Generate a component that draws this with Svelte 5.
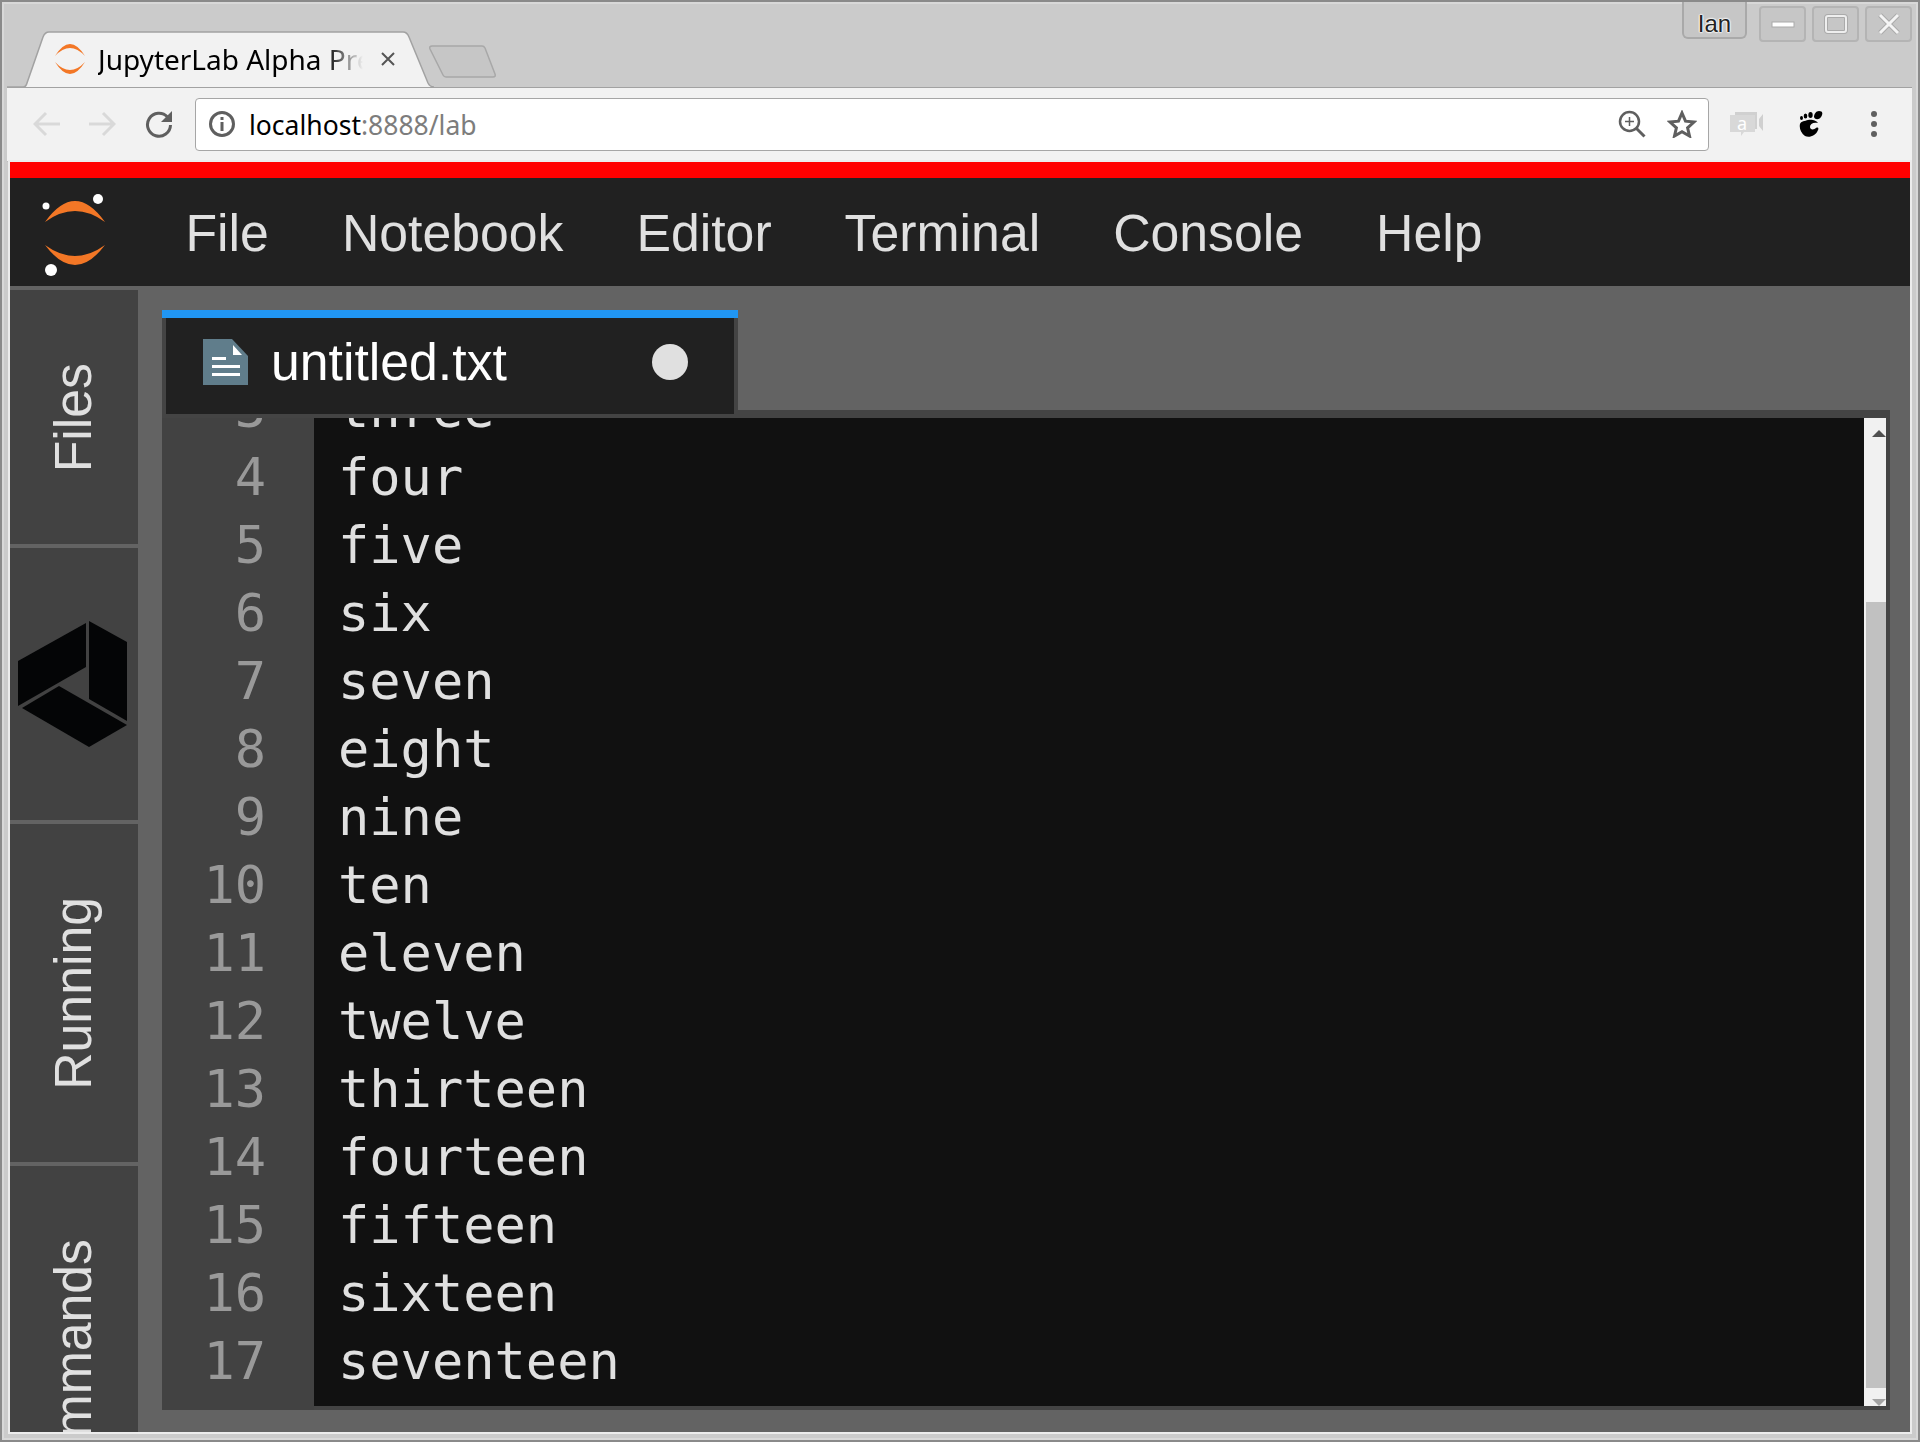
<script lang="ts">
	const menus = ['File', 'Notebook', 'Editor', 'Terminal', 'Console', 'Help'];
	const lines = [
		'one', 'two', 'three', 'four', 'five', 'six', 'seven', 'eight', 'nine', 'ten',
		'eleven', 'twelve', 'thirteen', 'fourteen', 'fifteen', 'sixteen', 'seventeen'
	];
</script>

<div class="window">
	<!-- browser chrome -->
	<div class="tabstrip">
		<div class="browser-tab">
			<svg class="tab-shape" width="420" height="60" viewBox="0 0 420 60">
				<path d="M-14 56 H2 Q5 56 6 52 L22 6 Q24 1 28 1 H382 Q386 1 388 6 L407 52 Q409 56 413 56" fill="#f2f2f2" stroke="#a2a2a2" stroke-width="1.5" />
			</svg>
			<svg class="favicon" width="30" height="30" viewBox="0 0 30 30">
				<path d="M0 12 Q15 -12 30 12 Q15 -4 0 12Z M0 18 Q15 42 30 18 Q15 34 0 18Z" fill="#f37726" />
			</svg>
			<span class="tab-title">JupyterLab Alpha Preview</span>
			<svg class="tab-close" width="14" height="14" viewBox="0 0 14 14">
				<path d="M1 1 L13 13 M13 1 L1 13" stroke="#555" stroke-width="2" />
			</svg>
		</div>
		<svg class="new-tab" width="68" height="34" viewBox="0 0 68 34">
			<path d="M3 1 H53 Q55 1 56 3 L66 29 Q67 32 64 32 H17 Q15 32 14 30 L1 4 Q0 1 3 1Z" fill="#c6c6c6" stroke="#a8a8a8" stroke-width="1.5" />
		</svg>
		<div class="spacer"></div>
		<div class="user-chip">Ian</div>
		<div class="win-btn">
			<svg width="24" height="10" viewBox="0 0 24 10"><rect x="1" y="3" width="22" height="5" fill="#fff" stroke="#aaa" /></svg>
		</div>
		<div class="win-btn">
			<svg width="24" height="20" viewBox="0 0 24 20"><rect x="2" y="2" width="20" height="16" rx="2" fill="none" stroke="#aaa" stroke-width="4" /><rect x="2" y="2" width="20" height="16" rx="2" fill="none" stroke="#eee" stroke-width="2" /></svg>
		</div>
		<div class="win-btn">
			<svg width="24" height="22" viewBox="0 0 24 22"><path d="M3 2 L21 20 M21 2 L3 20" stroke="#aaa" stroke-width="5" /><path d="M3 2 L21 20 M21 2 L3 20" stroke="#f4f4f4" stroke-width="3" /></svg>
		</div>
	</div>

	<div class="toolbar">
		<svg class="nav" width="28" height="26" viewBox="0 0 28 26">
			<path d="M27 13 H3 M13 2 L2 13 L13 24" fill="none" stroke="#d9d9d9" stroke-width="3" />
		</svg>
		<svg class="nav fwd" width="28" height="26" viewBox="0 0 28 26">
			<path d="M1 13 H25 M15 2 L26 13 L15 24" fill="none" stroke="#d9d9d9" stroke-width="3" />
		</svg>
		<svg class="nav" width="28" height="28" viewBox="0 0 28 28">
			<path d="M22.5 7 A11.5 11.5 0 1 0 25.5 15" fill="none" stroke="#5f5f5f" stroke-width="3" />
			<path d="M27 1 V12 H16 Z" fill="#5f5f5f" />
		</svg>
		<div class="omnibox">
			<svg class="info" width="28" height="28" viewBox="0 0 28 28">
				<circle cx="14" cy="14" r="11.5" fill="none" stroke="#5f5f5f" stroke-width="3" />
				<rect x="12.5" y="12" width="3" height="9" fill="#5f5f5f" />
				<rect x="12.5" y="7" width="3" height="3" fill="#5f5f5f" />
			</svg>
			<span class="url"><span class="host">localhost</span>:8888/lab</span>
			<div class="spacer"></div>
			<svg class="zoom-icon" width="28" height="28" viewBox="0 0 28 28">
				<circle cx="11.5" cy="11.5" r="9.5" fill="none" stroke="#5f5f5f" stroke-width="2.5" />
				<path d="M7 11.5 H16 M11.5 7 V16" stroke="#5f5f5f" stroke-width="1.5" />
				<path d="M18.5 18.5 L26.5 26.5" stroke="#5f5f5f" stroke-width="3" />
			</svg>
			<svg class="star" width="30" height="28" viewBox="0 0 30 28">
				<path d="M15 3 L18.5 11.2 L27 12 L20.6 17.8 L22.5 26 L15 21.7 L7.5 26 L9.4 17.8 L3 12 L11.5 11.2 Z" fill="none" stroke="#5f5f5f" stroke-width="3" />
			</svg>
		</div>
		<div class="ext-icon">
			<svg width="33" height="27" viewBox="0 0 33 27">
				<path d="M0 4 H25 V21 H14 L11 25 L11 21 H0 Z" fill="#d8d8d8" />
				<path d="M5 1 H27 V18 H25 V4 H5 Z M29 8 L33 3 V20 L29 15 Z" fill="#d0d0d0" />
			</svg>
			<span class="ext-a">a</span>
		</div>
		<svg class="gnome" width="24" height="26" viewBox="0 0 24 26">
			<path d="M20 0 C24 0 24 3 22 6 C20 9 16 9 15 6 C15 3 17 0 20 0Z" fill="#000" />
			<ellipse cx="11.5" cy="4" rx="2.2" ry="3" fill="#000" />
			<ellipse cx="6.5" cy="5" rx="1.8" ry="2.5" fill="#000" />
			<ellipse cx="2.5" cy="7" rx="1.5" ry="2" fill="#000" />
			<path d="M9 9 C13 8 18 10 19 12 C14 11 11 13 11 16 C11 19 15 19 17 17 C19 16 20 17 19 19 C17 25 10 27 6 25 C2 22 0 17 1 13 C2 10 6 10 9 9Z" fill="#000" />
		</svg>
		<div class="kebab"><i></i><i></i><i></i></div>
	</div>

	<!-- the lab itself -->
	<div class="lab">
		<div class="redbar"></div>
		<header class="menubar">
			<svg class="logo" width="66" height="78" viewBox="0 0 66 78">
				<path d="M3 29 Q33 -13 63 29 Q33 7 3 29Z M3 52 Q33 92 63 52 Q33 74 3 52Z" fill="#f37726" />
				<circle cx="56" cy="6" r="5" fill="#fff" />
				<circle cx="4" cy="13" r="3.5" fill="#fff" />
				<circle cx="9" cy="77" r="6" fill="#fff" />
			</svg>
			<nav>
				{#each menus as m}
					<span class="menu-item">{m}</span>
				{/each}
			</nav>
		</header>

		<div class="workspace">
			<aside class="sidebar">
				<div class="side-tab"><span>Files</span></div>
				<div class="side-tab cube">
					<svg width="110" height="126" viewBox="18 621 110 126">
						<path d="M18 661 L86 623 V667 L18 706Z" fill="#040506" />
						<path d="M89 621 L127 642 V721 L89 699Z" fill="#040506" />
						<path d="M22 708 L59 686 L127 725 L89 747Z" fill="#040506" />
					</svg>
				</div>
				<div class="side-tab"><span>Running</span></div>
				<div class="side-tab"><span>Commands</span></div>
			</aside>

			<main class="dock">
				<div class="dock-tabs">
					<div class="doc-tab">
						<div class="doc-tab-body">
							<svg width="46" height="47" viewBox="0 0 46 47">
								<path d="M0 0 H29 L45 17 V46 H0Z" fill="#607d8b" />
								<path d="M30 6 L39 16 H30Z" fill="#fff" />
								<path d="M9 19.5 H23 M9 27.5 H37 M9 35.5 H37" stroke="#fff" stroke-width="3" />
							</svg>
							<span class="doc-title">untitled.txt</span>
							<div class="spacer"></div>
							<span class="dirty"></span>
						</div>
					</div>
				</div>
				<div class="editor">
					<div class="gutter">
						<div class="scroller">
							{#each lines as _, i}
								<div class="ln">{i + 1}</div>
							{/each}
						</div>
					</div>
					<div class="code">
						<div class="scroller">
							{#each lines as line}
								<div class="cl">{line}</div>
							{/each}
						</div>
					</div>
					<div class="vscroll">
						<div class="arrow up"></div>
						<div class="track"></div>
						<div class="thumb"></div>
						<div class="arrow-box"><div class="arrow down"></div></div>
					</div>
				</div>
			</main>
		</div>
	</div>
</div>

<style>
	:global(body) {
		margin: 0;
		background: #c9c9c9;
	}
	.window {
		box-sizing: border-box;
		width: 1920px;
		height: 1442px;
		display: flex;
		flex-direction: column;
		overflow: hidden;
		padding: 2px 8px 10px 7px;
		background: #cbcbcb;
		box-shadow: inset 0 0 0 2px #8a8a8a, inset 0 0 0 4px #d8d8d8;
		font-family: 'Liberation Sans', Arial, sans-serif;
	}
	.spacer {
		flex: 1;
	}

	/* tabs + window buttons */
	.tabstrip {
		height: 85px;
		flex: none;
		display: flex;
		align-items: flex-start;
		border-bottom: 1px solid #a2a2a2;
		position: relative;
	}
	.browser-tab {
		position: relative;
		width: 420px;
		height: 56px;
		margin: 29px 0 0 15px;
		display: flex;
		align-items: center;
		z-index: 1;
	}
	.tab-shape {
		position: absolute;
		left: -1px;
		top: 0;
		overflow: visible;
	}
	.favicon {
		position: relative;
		margin-left: 33px;
		flex: none;
		overflow: visible;
	}
	.tab-title {
		position: relative;
		width: 265px;
		margin-left: 13px;
		overflow: hidden;
		white-space: nowrap;
		font-family: 'Noto Sans', sans-serif;
		font-size: 28px;
		color: #000;
		-webkit-mask-image: linear-gradient(to right, #000 86%, transparent 100%);
		mask-image: linear-gradient(to right, #000 86%, transparent 100%);
	}
	.tab-close {
		position: relative;
		margin-left: 18px;
	}
	.new-tab {
		margin: 43px 0 0 -13px;
	}
	.user-chip {
		box-sizing: border-box;
		width: 65px;
		height: 37px;
		margin-right: 12px;
		border: 2px solid #a9a9a9;
		border-top: none;
		border-radius: 0 0 6px 6px;
		background: #c6c6c6;
		text-align: center;
		font-size: 24px;
		line-height: 44px;
		color: #222;
		text-shadow: 0 0 2px #fff, 0 0 2px #fff, 0 0 2px #fff, 0 0 2px #fff;
	}
	.win-btn {
		box-sizing: border-box;
		width: 47px;
		height: 36px;
		margin: 4px 6px 0 0;
		display: flex;
		align-items: center;
		justify-content: center;
		border: 2px solid #b4b4b4;
		border-radius: 4px;
		background: #c6c6c6;
	}
	.win-btn:last-child {
		margin-right: 0;
	}

	/* address bar row */
	.toolbar {
		height: 72px;
		flex: none;
		display: flex;
		align-items: center;
		background: #f2f2f2;
		padding: 0 0 1px 26px;
		border-bottom: 1px solid #bdbdbd;
	}
	.nav {
		flex: none;
		margin-right: 28px;
	}
	.nav.fwd {
		margin-left: -1px;
		margin-right: 29px;
	}
	.omnibox {
		box-sizing: border-box;
		flex: none;
		width: 1514px;
		height: 53px;
		margin-left: -6px;
		display: flex;
		align-items: center;
		padding: 0 11px 0 12px;
		background: #fff;
		border: 1.5px solid #a6a6a6;
		border-radius: 4px;
	}
	.url {
		margin: 1px 0 -1px 13px;
		font-family: 'Noto Sans', sans-serif;
		font-size: 26.5px;
		color: #7d7d7d;
	}
	.host {
		color: #000;
	}
	.star {
		margin-left: 21px;
	}
	.ext-icon {
		position: relative;
		width: 33px;
		height: 27px;
		margin-left: 21px;
	}
	.ext-a {
		position: absolute;
		left: 7px;
		top: 0;
		font-family: 'Noto Sans', sans-serif;
		font-size: 18px;
		color: #fff;
	}
	.gnome {
		margin-left: 36px;
	}
	.kebab {
		display: flex;
		flex-direction: column;
		gap: 4px;
		margin-left: 48px;
	}
	.kebab i {
		width: 6px;
		height: 6px;
		border-radius: 50%;
		background: #5f5f5f;
	}

	/* lab */
	.lab {
		flex: 1;
		min-height: 0;
		display: flex;
		flex-direction: column;
		margin: 0 2px 0 3px;
		box-shadow: 0 0 0 2px #ececec;
	}
	.redbar {
		height: 16px;
		flex: none;
		background: #f00;
	}
	.menubar {
		height: 108px;
		flex: none;
		display: flex;
		align-items: center;
		background: #212121;
	}
	.logo {
		flex: none;
		margin-left: 32px;
		overflow: visible;
	}
	nav {
		display: flex;
		margin: 2px 0 0 41px;
	}
	.menu-item {
		padding: 0 36.5px;
		font-size: 51.75px;
		color: #e0e0e0;
	}
	.workspace {
		flex: 1;
		min-height: 0;
		display: flex;
		background: #636363;
	}
	.sidebar {
		flex: none;
		width: 128px;
		margin-top: 4px;
		display: flex;
		flex-direction: column;
		gap: 4px;
		overflow: hidden;
	}
	.side-tab {
		flex: none;
		display: flex;
		justify-content: center;
		padding: 72.5px 2px 72.5px 0;
		background: #424242;
		font-size: 51.75px;
		color: #e0e0e0;
	}
	.side-tab span {
		writing-mode: vertical-rl;
		transform: rotate(180deg);
		line-height: 60px;
	}
	.side-tab.cube {
		padding: 0 2px 0 0;
		height: 272px;
		align-items: center;
	}
	.dock {
		flex: 1;
		min-width: 0;
		display: flex;
		flex-direction: column;
		padding: 24px 20px 22px 24px;
	}
	.dock-tabs {
		height: 100px;
		flex: none;
		display: flex;
	}
	.doc-tab {
		position: relative;
		z-index: 1;
		box-sizing: border-box;
		width: 576px;
		height: 104px;
		border-top: 8px solid #2196f3;
		background: #444;
		padding: 0 4px;
	}
	.doc-tab-body {
		box-sizing: border-box;
		height: 100%;
		display: flex;
		align-items: center;
		padding: 0 46px 8px 37px;
		background: #212121;
	}
	.doc-title {
		margin: -1px 0 0 22px;
		font-size: 51.75px;
		color: #fff;
	}
	.dirty {
		width: 36px;
		height: 36px;
		border-radius: 50%;
		background: #e0e0e0;
	}
	.editor {
		flex: 1;
		min-height: 0;
		display: flex;
		background: #444;
		border-style: solid;
		border-color: #444;
		border-width: 8px 4px 4px 0;
		font-family: 'DejaVu Sans Mono', monospace;
		font-size: 52px;
		line-height: 68px;
	}
	.gutter {
		flex: none;
		width: 152px;
		overflow: hidden;
		background: #424242;
		margin-bottom: -4px;
	}
	.scroller {
		margin-top: -179px;
	}
	.ln {
		height: 68px;
		padding-right: 48px;
		text-align: right;
		color: #999;
	}
	.code {
		flex: 1;
		min-width: 0;
		overflow: hidden;
		background: #111;
	}
	.cl {
		height: 68px;
		padding-left: 24px;
		color: #e0e0e0;
	}
	.vscroll {
		flex: none;
		width: 22px;
		display: flex;
		flex-direction: column;
		background: #f1f1f1;
	}
	.track {
		flex: 1;
	}
	.thumb {
		height: 786px;
		margin-left: 2px;
		background: #c1c1c1;
	}
	.arrow {
		width: 0;
		height: 0;
		margin-left: 8px;
		border-left: 7px solid transparent;
		border-right: 7px solid transparent;
	}
	.arrow.up {
		margin-top: 12px;
		border-bottom: 7px solid #505050;
	}
	.arrow-box {
		height: 18px;
		display: flex;
		align-items: flex-end;
	}
	.arrow.down {
		border-top: 7px solid #a3a3a3;
	}
</style>
